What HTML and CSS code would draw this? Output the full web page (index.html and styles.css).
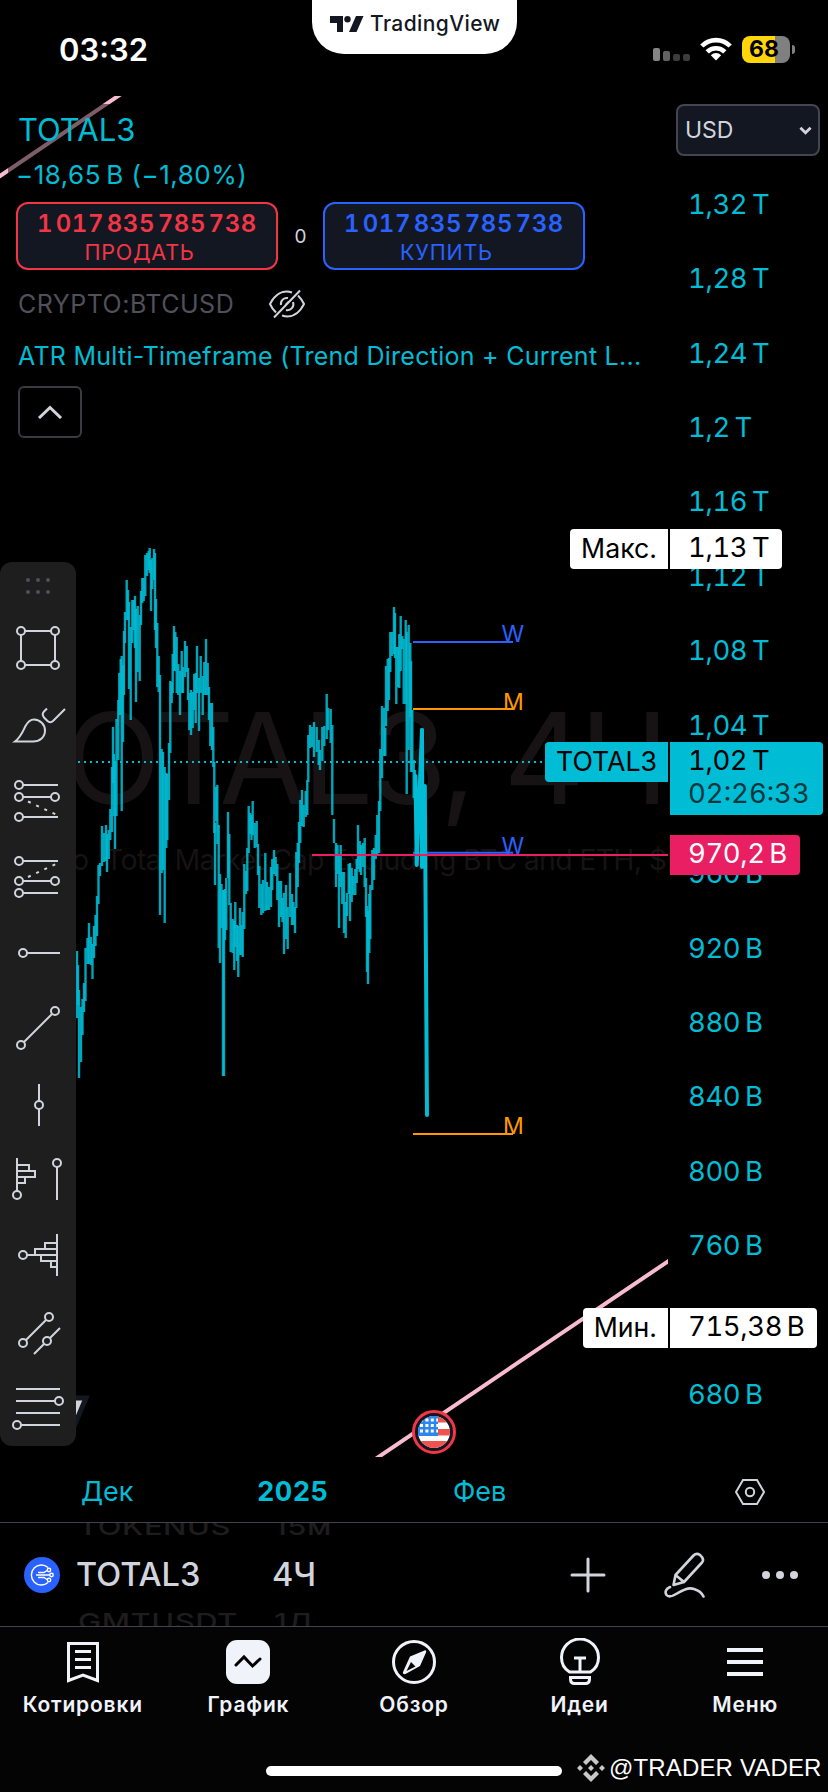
FILE: index.html
```html
<!DOCTYPE html>
<html lang="ru">
  <head>
    <meta charset="UTF-8" />
    <meta name="viewport" content="width=device-width, initial-scale=1.0" />
    <title>TOTAL3</title>
    <link rel="stylesheet" href="styles.css">
  </head>
  <body>
    <header class="status-bar">
      <span class="clock">03:32</span>
      <div class="brand">
        <svg width="34" height="16" viewBox="0 0 34 16"><path d="M0 0H13V16H7V7H0Z"/><circle cx="17.500" cy="3.200" r="3.200"/><path d="M26 0H33.500L26.500 16H19Z"/></svg>
        <span>TradingView</span>
      </div>
      <div class="status-icons">
        <svg width="38" height="14" viewBox="0 0 38 14"><rect x="0" y="0" width="7" height="13" rx="2" fill="#858585"/><rect x="10" y="3" width="7" height="10" rx="2" fill="#626262"/><rect x="20" y="6" width="7" height="7" rx="2" fill="#3c3c3c"/><rect x="30" y="6" width="7" height="7" rx="2" fill="#3c3c3c"/></svg>
        <svg class="wifi" width="32" height="24" viewBox="0 0 32 24"><g fill="none" stroke="#fff" stroke-width="4.600"><path d="M1.800 9A20 20 0 0 1 30.200 9"/><path d="M7.200 14.800A12.500 12.500 0 0 1 24.800 14.800"/></g><path d="M16 23.500L10.800 18.200A7.500 7.500 0 0 1 21.200 18.200Z" fill="#fff"/></svg>
        <div class="battery"><span>68</span></div>
        <div class="battery-tip"></div>
      </div>
    </header>

    <main class="chart">
      <section class="pane">
        <svg class="plot" width="668" height="1361" viewBox="0 96 668 1361">
          <g class="watermark">
            <text x="-9" y="804" font-size="126" textLength="678">TOTAL3, 4Ч</text>
            <text x="89" y="870" font-size="28.500" text-anchor="end">Crypto</text>
            <text x="105" y="870" font-size="28.500" textLength="562">Total Market Cap Excluding BTC and ETH, $</text>
          </g>
          <path d="M78 762H546" stroke="#00bcd4" stroke-width="2" stroke-dasharray="2 4"/>
          <g stroke-width="2" fill="none">
            <path d="M413 642H513M413 852.800H513" stroke="#2962ff"/>
            <path d="M413 709H513M413 1134H513" stroke="#ff9800"/>
          </g>
          <g id="price-bars"></g>
          <path class="live" d="M415.500 776L416.700 865L422 730L422.400 866L424.800 786L427 1115"/>
          <path class="live" d="M422 730V867"/>
          <path d="M312 855H668" stroke="#e91e63" stroke-width="2"/>
          <g font-size="23">
            <text x="501.500" y="642" fill="#2962ff">W</text>
            <text x="503" y="709.500" fill="#ff9800">M</text>
            <text x="501.500" y="854" fill="#2962ff">W</text>
            <text x="503" y="1134" fill="#ff9800">M</text>
          </g>
          <path d="M374 1460L670 1260M-3 178L124 92" stroke="#f8bbd0" stroke-width="4"/>
          <path d="M50 1398H86L70 1436Z" fill="#d1d1d6" stroke="#131722" stroke-width="5"/>
          <g transform="translate(434 1432)">
            <clipPath id="flag"><circle r="16"/></clipPath>
            <circle r="20.500" fill="#131722" stroke="#f23645" stroke-width="3"/>
            <g clip-path="url(#flag)">
              <path d="M-16-16H16V16H-16Z" fill="#fff"/>
              <path d="M-16-16H16V-9.500H-16ZM-16-3H16V3.500H-16ZM-16 9H16V16H-16Z" fill="#ef5350"/>
              <path d="M-16-16H4V4H-16Z" fill="#2b87ee"/>
              <path d="M-14-12H4M-14-6.500H4M-14-1H4" stroke="#fff" stroke-width="3" stroke-dasharray="3 2.400"/>
            </g>
          </g>
        </svg>

        <div class="legend">
          <div class="legend-head">
            <h1>TOTAL3</h1>
            <p class="change">−18,65&#8201;B (−1,80%)</p>
            <div class="trade">
              <button class="sell"><b>1&#8202;017&#8202;835&#8202;785&#8202;738</b><span>ПРОДАТЬ</span></button>
              <span class="spread">0</span>
              <button class="buy"><b>1&#8202;017&#8202;835&#8202;785&#8202;738</b><span>КУПИТЬ</span></button>
            </div>
          </div>
          <div class="study hidden-study">
            <span>CRYPTO:BTCUSD</span>
            <svg width="38" height="30" viewBox="0 0 38 30" fill="none" stroke="#d1d4dc" stroke-width="2"><path d="M24 3.500C15 .5 7 5 2 15C3.500 18.500 5.500 21 8 23.500M14 26.500C23 29.500 31 25 36 15C34.500 11.500 32.500 9 30 6.500"/><path d="M20 9A6 6 0 0 0 13 16M25 13A6 6 0 0 1 18 21M6 28.500L32 1.500M17.500 16L21 12.500"/></svg>
          </div>
          <div class="study"><span>ATR Multi-Timeframe (Trend Direction + Current L...</span></div>
          <button class="collapse"><svg width="26" height="14" viewBox="0 0 26 14" fill="none" stroke="#d1d4dc" stroke-width="3"><path d="M2 13L13 2.500L24 13"/></svg></button>
        </div>

        <nav class="tools">
          <svg class="grip" width="76" height="48" viewBox="0 0 76 48"><circle cx="28" cy="18" r="2"/><circle cx="38" cy="18" r="2"/><circle cx="48" cy="18" r="2"/><circle cx="28" cy="30" r="2"/><circle cx="38" cy="30" r="2"/><circle cx="48" cy="30" r="2"/></svg>
          <svg class="tool" viewBox="0 0 76 76"><path d="M25 21H51M25 55H51M21 25V51M55 25V51"/><circle cx="21" cy="21" r="4"/><circle cx="55" cy="21" r="4"/><circle cx="21" cy="55" r="4"/><circle cx="55" cy="55" r="4"/></svg>
          <svg class="tool" viewBox="0 0 76 76"><path d="M15 55.500C21 51 23 45 25.500 40C28 35.500 30.500 33.500 34 33.500C40 33.500 45 38.500 45 44.500C45 51 40 55.500 33 55.500ZM47 22.500L44 25.500C42.500 27 42.500 29.500 44 31.500L47.500 35C49 36.500 51.500 36.500 53 35L65 23"/></svg>
          <svg class="tool" viewBox="0 0 76 76"><path d="M23 23H58M23 35H51M23 55H58"/><path class="dots" d="M28 39.500L56 52.500"/><circle cx="19" cy="23" r="4"/><circle cx="19" cy="35" r="4"/><circle cx="55" cy="35" r="4"/><circle cx="19" cy="55" r="4"/></svg>
          <svg class="tool" viewBox="0 0 76 76"><path d="M23 23H58M23 43H51M23 55H58"/><path class="dots" d="M28 39L56 26"/><circle cx="19" cy="23" r="4"/><circle cx="19" cy="43" r="4"/><circle cx="55" cy="43" r="4"/><circle cx="19" cy="55" r="4"/></svg>
          <svg class="tool" viewBox="0 0 76 76"><path d="M27 39H60"/><circle cx="23" cy="39" r="4"/></svg>
          <svg class="tool" viewBox="0 0 76 76"><path d="M24 52L52 24"/><circle cx="21" cy="55" r="4"/><circle cx="55" cy="21" r="4"/></svg>
          <svg class="tool" viewBox="0 0 76 76"><path d="M39 18V35M39 43V60"/><circle cx="39" cy="39" r="4"/></svg>
          <svg class="tool" viewBox="0 0 76 76"><path d="M17 16V49M17 23H29V29M17 29H35V35H17M25 35V41H17M57 25V58"/><circle cx="17" cy="53" r="4"/><circle cx="57" cy="21" r="4"/></svg>
          <svg class="tool" viewBox="0 0 76 76"><path d="M57 16V58M57 25H45V31M57 31H35V37M27 37H57M41 37V43H57M51 43V49H57"/><circle cx="23" cy="37" r="4"/></svg>
          <svg class="tool" viewBox="0 0 76 76"><path d="M26 46L46 26M34 60L44 50M50 44L60 34"/><circle cx="23" cy="49" r="4"/><circle cx="49" cy="23" r="4"/><circle cx="47" cy="47" r="4"/></svg>
          <svg class="tool" viewBox="0 0 76 76"><path d="M16 19H60M16 31H55M16 43H60M21 55H60"/><circle cx="59" cy="31" r="4"/><circle cx="17" cy="55" r="4"/></svg>
        </nav>
      </section>

      <aside class="price-axis">
        <button class="currency"><span>USD</span><svg width="13" height="9" viewBox="0 0 14 9" fill="none" stroke="#d1d4dc" stroke-width="3"><path d="M1.500 1.500L7 7L12.500 1.500"/></svg></button>
        <ul class="prices">
          <li>1,32&#8201;T</li>
          <li>1,28&#8201;T</li>
          <li>1,24&#8201;T</li>
          <li>1,2&#8201;T</li>
          <li>1,16&#8201;T</li>
          <li>1,12&#8201;T</li>
          <li>1,08&#8201;T</li>
          <li>1,04&#8201;T</li>
          <li></li>
          <li>960&#8201;B</li>
          <li>920&#8201;B</li>
          <li>880&#8201;B</li>
          <li>840&#8201;B</li>
          <li>800&#8201;B</li>
          <li>760&#8201;B</li>
          <li></li>
          <li>680&#8201;B</li>
        </ul>
      </aside>

      <div class="tag tag-max"><span class="tag-name">Макс.</span><span class="tag-value">1,13&#8201;T</span></div>
      <div class="tag tag-last"><span class="tag-name">TOTAL3</span><span class="tag-value">1,02&#8201;T<i>02:26:33</i></span></div>
      <div class="tag tag-line"><span></span><span class="tag-value">970,2&#8201;B</span></div>
      <div class="tag tag-min"><span class="tag-name">Мин.</span><span class="tag-value">715,38&#8201;B</span></div>
    </main>

    <div class="time-axis">
      <span>Дек</span>
      <b>2025</b>
      <span>Фев</span>
      <svg width="30" height="28" viewBox="0 0 30 28" fill="none" stroke="#d1d4dc" stroke-width="2"><path d="M8 2H22L29 14L22 26H8L1 14Z"/><circle cx="15" cy="14" r="4.200"/></svg>
    </div>

    <section class="symbol-bar">
      <div class="ghost ghost-prev"><span>TOKENUS</span><span>15м</span></div>
      <div class="current">
        <svg width="36" height="36" viewBox="0 0 36 36" fill="none" stroke="#fff" stroke-width="1.400"><circle cx="18" cy="18" r="18" fill="#2962ff" stroke="none"/><path d="M24 10.500A10 10 0 1 0 24 25.500M14 15.500H20L23 13.500M12 18H26M14 20.500H20L23 22.500M15 18H24"/><circle cx="25" cy="13" r="1.700"/><circle cx="27.500" cy="18" r="1.700"/><circle cx="25" cy="23" r="1.700"/></svg>
        <strong>TOTAL3</strong>
        <strong>4Ч</strong>
      </div>
      <div class="ghost ghost-next"><span>GMTUSDT</span><span>1Д</span></div>
      <div class="actions">
        <svg width="36" height="36" viewBox="0 0 36 36" stroke="#d1d4dc" stroke-width="3" stroke-linecap="round"><path d="M18 2V34M2 18H34"/></svg>
        <svg width="42" height="46" viewBox="0 0 42 46" fill="none" stroke="#d1d4dc" stroke-width="2.600" stroke-linecap="round" stroke-linejoin="round"><path d="M9.500 33L11.500 23L29.500 3.500C31.500 1.500 34 1.500 36 3C39 5.500 40 8 38 10.500L20 30ZM11.500 23L20 30"/><path d="M6 35C2 36.500 .5 40 2.500 43C5 46 9 44 13 41.500C19 38 24 35 30 37C34.500 38.500 38 41 39.500 44.500"/></svg>
        <svg width="36" height="8" viewBox="0 0 36 8" fill="#d1d4dc"><circle cx="4" cy="4" r="4"/><circle cx="18" cy="4" r="4"/><circle cx="32" cy="4" r="4"/></svg>
      </div>
    </section>

    <footer class="tab-bar">
      <nav class="tabs">
        <a><svg width="48" height="48" viewBox="0 0 48 48" fill="none" stroke="#f0f3fa" stroke-width="3"><path d="M9.500 5.500H38.500V42.500L24 37L9.500 42.500ZM16 13.500H32M16 21.500H32M16 29.500H32"/></svg>Котировки</a>
        <a><svg width="48" height="48" viewBox="0 0 48 48"><rect x="2" y="2" width="44" height="44" rx="11" fill="#f0f3fa"/><path d="M12 27L20 19L28.500 28L36 21" fill="none" stroke="#000" stroke-width="3" stroke-linecap="round"/></svg>График</a>
        <a><svg width="48" height="48" viewBox="0 0 48 48" fill="#f0f3fa"><circle cx="24" cy="24" r="20.500" fill="none" stroke="#f0f3fa" stroke-width="3"/><path fill-rule="evenodd" d="M34.500 12.500C36 12 36.500 13 36 14.500L30 28L15.500 36C13.500 36.500 12.500 35.500 13 34L20 18.500ZM21 24L16.500 33L25.500 28.500Z"/></svg>Обзор</a>
        <a><svg width="48" height="48" viewBox="0 0 48 48" fill="none" stroke="#f0f3fa" stroke-width="3"><path d="M13.500 34C7 30 5.500 24.500 5.500 19.500A18.500 18.500 0 0 1 42.500 19.500C42.500 24.500 41 30 34.500 34ZM18 20H30M24 20V34M14.500 39.500H33.500V41C33.500 44 32 45.500 29.500 45.500H18.500C16 45.500 14.500 44 14.500 41Z"/></svg>Идеи</a>
        <a><svg width="48" height="48" viewBox="0 0 48 48" stroke="#f0f3fa" stroke-width="4"><path d="M6 12H42M6 24H42M6 36H42"/></svg>Меню</a>
      </nav>
      <div class="home-row">
        <div class="home-indicator"></div>
        <div class="credit">
          <svg width="28" height="28" viewBox="0 0 28 28" fill="#c8c8c8"><path d="M14 0L22 8L19 11L14 6L9 11L6 8ZM14 28L22 20L19 17L14 22L9 17L6 20ZM14 11L17 14L14 17L11 14ZM3 11L6 14L3 17L0 14ZM25 11L28 14L25 17L22 14Z"/></svg>
          <span>@TRADER VADER</span>
        </div>
      </div>
    </footer>

    <script>
      // x, high, low
      const bars = [
        [77,951,1018],[78,965,1005],[79,990,1078],[81,1007,1062],[82.5,999,1035],[84,983,1012],[85.5,948,1001],[87.5,938,964],
        [89,923,964],[91,937,965],[92.5,944,979],[94,926,958],[95.5,915,946],[97,896,936],[98.5,865,904],[100,863,876],
        [102,826,866],[104,833,862],[106,825,861],[107,834,872],[108.7,830,859],[110.3,809,840],[112,767,832],[113,727,783],
        [114,754,816],[115,762,849],[116.5,719,816],[118.3,700,760],[119.3,673,715],[120.7,659,715],[121.7,656,811],[123,665,742],
        [124,631,695],[125,612,643],[126.7,580,620],[128,590,620],[129,602,689],[130.7,627,720],[132.3,600,643],[133.7,600,630],
        [135,596,648],[136,609,702],[137.7,606,672],[139.7,615,681],[141,591,625],[142.3,578,603],[143.7,578,601],[145.3,555,596],
        [147,553,576],[148.7,551,570],[149.7,548,573],[151,560,611],[152.3,558,589],[154,549,580],[155,553,630],[156,599,648],
        [157.3,623,687],[158.7,656,692],[160,675,915],[161.7,749,873],[163,752,870],[164.7,767,923],[166.3,773,848],[167.3,774,840],
        [169,743,800],[170.3,681,753],[171.7,682,703],[172.7,654,693],[174,626,671],[175.3,632,671],[176.7,637,693],[178.3,664,695],
        [180,671,715],[181.7,651,693],[183,667,693],[185,641,677],[186.7,646,672],[188,668,700],[189.3,693,730],[191,690,735],
        [192.7,692,728],[194.3,674,710],[195.7,673,723],[197,646,693],[199,678,731],[200.7,656,693],[202.7,676,715],[204.3,662,695],
        [206,639,695],[207.7,663,695],[209,687,720],[210.3,703,746],[212,703,750],[213.3,727,767],[214.3,762,833],[215,823,885],
        [216,787,821],[217.3,785,844],[218.7,825,948],[220,874,963],[221.5,884,928],[223,890,1076],[224,890,1076],[225,889,940],
        [226.3,878,930],[228,812,878],[229.3,834,905],[230.7,903,952],[232.7,919,953],[234.3,921,970],[235.3,902,947],[237,925,961],
        [238.3,926,977],[240,908,955],[241.5,925,955],[242.7,912,957],[244.3,864,929],[246,871,894],[247.3,848,891],[248.7,806,853],
        [250.3,813,834],[251.5,815,840],[252.7,801,835],[254.7,823,848],[256.7,821,847],[258,844,875],[259.3,866,908],[261.3,884,915],
        [263,880,913],[265.3,853,911],[267,882,910],[269,887,910],[271,867,907],[272.3,859,890],[274,850,874],[275.7,857,876],
        [277.3,864,900],[279,881,927],[281,881,917],[282.5,898,922],[284,893,954],[286,885,939],[287.7,907,949],[290,873,917],
        [292,894,925],[293.5,902,925],[295,907,933],[296.3,852,908],[297.7,843,887],[299,822,863],[300.3,800,843],[302,790,826],
        [303.7,805,827],[305.7,791,817],[307.3,780,815],[308.3,735,782],[310,725,748],[312,727,747],[314,722,757],[316.7,727,752],
        [318.7,740,765],[320,750,770],[322.3,727,761],[324.3,726,746],[326.7,694,739],[328.3,708,730],[330.7,709,743],[332.3,725,815],
        [334,819,843],[336,843,887],[337.5,845,874],[339,856,928],[340.7,845,887],[342.3,872,904],[344,872,933],[345.7,902,938],
        [347,893,916],[348.7,864,894],[350,863,921],[351.7,868,902],[353.3,876,895],[355.3,869,895],[356.7,859,883],[358,825,869],
        [359.7,841,872],[361,845,875],[363,843,867],[364.7,838,887],[366,878,917],[367,906,972],[368,911,984],[369.3,894,953],
        [370.3,885,939],[372.3,850,890],[374,848,880],[375.7,835,859],[377.3,815,854],[379,801,853],[380.3,749,811],[382,706,778],
        [384,708,756],[385.3,728,756],[386,666,726],[387.7,659,711],[389,658,700],[390.3,632,672],[392,632,656],[394,607,654],
        [395,613,658],[396.3,647,704],[398,647,687],[399.3,634,688],[400.7,616,671],[402.3,636,649],[403.7,639,704],[405.7,620,704],
        [406.7,632,794],[408.7,625,750],[410.3,643,717],[411,661,772],[412.3,710,772],[413.7,760,798],[415,770,800]
      ];

      const group = document.getElementById("price-bars");
      group.innerHTML = bars
        .map(([x, high, low]) => `<path d="M${x} ${high}V${low}"/>`)
        .join("");
    </script>
  </body>
</html>
```

FILE: styles.css
```css
* {
  box-sizing: border-box;
}
body {
  margin: 0;
  width: 828px;
  height: 1792px;
  background: #000;
  color: #f0f3fa;
  font-family: Inter, "Noto Sans", sans-serif;
  display: flex;
  flex-direction: column;
  overflow: hidden;
}
button {
  font-family: inherit;
  padding: 0;
}
svg {
  display: block;
  flex: none;
}

/* Status bar */
.status-bar {
  height: 96px;
  display: grid;
  grid-template-columns: 312px 205px 1fr;
}
.clock {
  padding: 31px 0 0 59px;
  font-size: 31px;
  line-height: 38px;
  font-weight: 600;
  color: #fff;
}
.brand {
  height: 54px;
  background: #fff;
  color: #131722;
  border-radius: 0 0 32px 32px;
  display: flex;
  gap: 6px;
  padding: 11px 0 0 18px;
  font-size: 21px;
  line-height: 26px;
  font-weight: 500;
  letter-spacing: 0.4px;
}
.brand svg {
  margin-top: 5px;
  fill: #131722;
}
.status-icons {
  display: flex;
  padding: 36px 0 0 136px;
}
.status-icons > svg {
  margin-top: 12px;
}
.status-icons .wifi {
  margin: 1px 10px 0 9px;
}
.battery {
  width: 48px;
  height: 27px;
  border-radius: 8px;
  background: linear-gradient(90deg, #ffd60a 33px, #808080 33px);
  color: #000;
  font-size: 23px;
  line-height: 27px;
  font-weight: 700;
  padding-left: 7px;
}
.battery-tip {
  width: 3px;
  height: 9px;
  margin: 9px 0 0 2px;
  background: #808080;
  border-radius: 0 3px 3px 0;
}

/* Chart */
.chart {
  position: relative;
  height: 1361px;
  display: grid;
  grid-template-columns: 668px 160px;
}
.pane {
  position: relative;
  overflow: hidden;
}
.plot {
  position: absolute;
  top: 0;
  left: 0;
}
.watermark {
  fill: #171213;
}
#price-bars {
  stroke: #00bcd4;
  stroke-width: 2.4;
  stroke-opacity: 0.88;
}
.live {
  fill: none;
  stroke: #00bcd4;
  stroke-width: 4;
  stroke-linecap: round;
  stroke-linejoin: round;
}

/* Legend */
.legend {
  position: relative;
  padding: 8px 0 0 8px;
  color: #00bcd4;
}
.legend-head {
  height: 172px;
  width: 600px;
  padding-left: 8px;
  background: rgba(0, 0, 0, 0.5);
}
.legend h1 {
  margin: 0 0 0 2px;
  padding-top: 6px;
  font-size: 31px;
  line-height: 40px;
  font-weight: 400;
}
.change {
  margin: 0;
  padding-top: 9px;
  height: 52px;
  font-size: 26px;
  line-height: 32px;
  letter-spacing: 0.5px;
}
.trade {
  display: flex;
  align-items: center;
}
.trade button {
  width: 262px;
  height: 68px;
  border: 2px solid;
  border-radius: 12px;
  background: #131722;
  display: flex;
  flex-direction: column;
  align-items: center;
  padding-top: 4px;
}
.trade b {
  font-size: 24px;
  line-height: 31px;
  font-weight: 600;
  font-variant-numeric: tabular-nums;
  letter-spacing: 0.6px;
}
.trade button span {
  margin-right: 15px;
  font-size: 21.5px;
  line-height: 26px;
  letter-spacing: 0.8px;
}
.trade .sell {
  color: #f23645;
}
.trade .buy {
  color: #2962ff;
}
.spread {
  width: 45px;
  text-align: center;
  font-size: 19px;
  color: #d1d4dc;
}
.study {
  height: 48px;
  padding-left: 10px;
  display: flex;
  align-items: center;
  font-size: 25px;
  line-height: 32px;
  letter-spacing: 0.26px;
  white-space: nowrap;
}
.hidden-study {
  height: 56px;
  color: #50505a;
  letter-spacing: 0.5px;
}
.hidden-study svg {
  margin-left: 34px;
}
.collapse {
  display: flex;
  align-items: center;
  justify-content: center;
  width: 64px;
  height: 52px;
  margin: 6px 0 0 10px;
  border: 2px solid #3a3a40;
  border-radius: 6px;
  background: #000;
}

/* Drawing tools */
.tools {
  position: absolute;
  left: 0;
  top: 466px;
  width: 76px;
  height: 884px;
  background: #1e1e1e;
  border-radius: 12px;
}
.grip {
  fill: #50505a;
}
.tool {
  width: 76px;
  height: 76px;
  fill: none;
  stroke: #d1d4dc;
  stroke-width: 2;
}
.tool .dots {
  stroke-dasharray: 3 6;
}

/* Price axis */
.price-axis {
  padding: 8px 8px 0;
}
.currency {
  display: flex;
  align-items: center;
  justify-content: space-between;
  width: 144px;
  height: 52px;
  padding: 0 6px 0 7px;
  border: 2px solid #434651;
  border-radius: 8px;
  background: #131722;
  color: #d1d4dc;
  font-size: 23px;
}
.prices {
  margin: 11px 0 0;
  padding: 0 0 0 12px;
  list-style: none;
  color: #00bcd4;
  font-size: 27.5px;
  font-variant-numeric: tabular-nums;
  letter-spacing: -0.4px;
}
.prices li {
  height: 74.37px;
  line-height: 75px;
}
.tag {
  position: absolute;
  left: 0;
  display: grid;
  grid-template-columns: 668px max-content;
  column-gap: 2px;
  align-items: start;
  font-size: 27.5px;
  line-height: 37px;
  color: #000;
}
.tag span {
  background: #fff;
}
.tag span:empty {
  background: none;
}
.tag-name {
  justify-self: end;
  height: 40px;
  font-size: 26.7px;
  line-height: 39px;
  padding: 0 11px;
  border-radius: 4px 0 0 4px;
}
.tag-value {
  height: 40px;
  padding: 0 13px 0 18px;
  border-radius: 0 4px 4px 0;
  font-variant-numeric: tabular-nums;
  letter-spacing: -0.4px;
}
.tag-max {
  top: 433px;
}
.tag-last {
  top: 646px;
}
.tag-last span {
  background: #00bcd4;
}
.tag-last .tag-value {
  height: 73px;
}
.tag-last i {
  display: block;
  line-height: 29px;
  font-style: normal;
  letter-spacing: 0;
  color: #04373d;
}
.tag-line {
  top: 739px;
  color: #fff;
}
.tag-line .tag-value {
  background: #e91e63;
}
.tag-min {
  top: 1212px;
}

/* Time axis */
.time-axis {
  height: 65px;
  display: grid;
  grid-template-columns: 176px 196px 282px 1fr;
  align-items: center;
  padding: 4px 0 0 81px;
  color: #00bcd4;
  font-size: 27px;
}
.time-axis b {
  font-variant-numeric: tabular-nums;
  letter-spacing: 0.4px;
}

/* Symbol picker */
.symbol-bar {
  position: relative;
  height: 105px;
  border-top: 1px solid #434349;
  border-bottom: 1px solid #434349;
  overflow: hidden;
  color: #d1d4dc;
  display: flex;
  align-items: center;
}
.current {
  display: grid;
  grid-template-columns: 52px 196px 100px;
  align-items: center;
  padding-left: 24px;
}
.current strong {
  font-size: 32.5px;
  font-weight: 500;
}
.ghost {
  position: absolute;
  left: 78px;
  display: grid;
  grid-template-columns: 196px 100px;
  color: #1e1c1d;
  font-size: 31px;
  line-height: 40px;
  font-weight: 500;
  letter-spacing: 0.5px;
  transform: scaleY(0.75);
}
.ghost-prev {
  top: -16px;
}
.ghost-next {
  bottom: -16px;
}
.actions {
  margin-left: auto;
  display: flex;
  align-items: center;
  padding-right: 30px;
}
.actions svg:nth-child(2) {
  margin: 0 56px 0 58px;
}

/* Bottom tabs */
.tab-bar {
  flex: 1;
  background: #040404;
}
.tabs {
  display: grid;
  grid-template-columns: repeat(5, 1fr);
  padding-top: 11px;
}
.tabs a {
  display: flex;
  flex-direction: column;
  align-items: center;
  font-size: 21px;
  line-height: 26px;
  font-weight: 600;
  letter-spacing: 0.8px;
  gap: 6px;
}
.home-row {
  display: flex;
  align-items: center;
  padding: 36px 0 0 266px;
}
.home-indicator {
  width: 296px;
  height: 10px;
  border-radius: 5px;
  background: #fff;
  margin-top: 6px;
}
.credit {
  display: flex;
  align-items: center;
  gap: 4px;
  margin-left: 15px;
  font: 24px/28px "Liberation Sans", Arial, sans-serif;
  letter-spacing: 0.15px;
  color: #fff;
  white-space: nowrap;
}
```
